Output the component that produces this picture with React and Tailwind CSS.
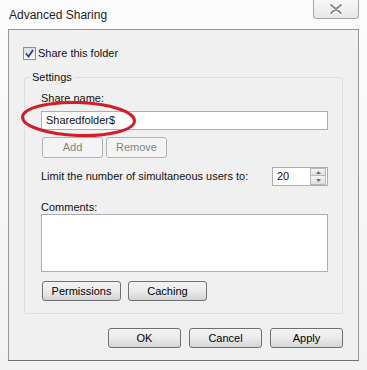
const btn =
  "flex items-center justify-center rounded-[3px] border border-[#707070] bg-linear-to-b from-[#f2f2f2] via-[#ebebeb] to-[#d4d4d4] text-black";
const btnOff =
  "flex items-center justify-center rounded-[3px] border border-[#adb2b5] bg-[#f4f4f4] text-[#838383]";

const CloseGlyph = () => (
  <svg width="14" height="10" viewBox="0 0 14 10">
    <path d="M2 1 L12 9 M12 1 L2 9" stroke="#ffffff" strokeWidth="4" strokeLinecap="round" />
    <path d="M2 1 L12 9 M12 1 L2 9" stroke="#8a8a8a" strokeWidth="2" strokeLinecap="round" />
  </svg>
);

const Check = () => (
  <svg width="9" height="9" viewBox="0 0 9 9">
    <path d="M1 4.5 L3.5 7.5 L8 1" fill="none" stroke="#2a3f86" strokeWidth="1.8" />
  </svg>
);

const Spin = () => (
  <div className="flex w-[16px] flex-col">
    <div className="flex h-[8px] items-center justify-center border border-[#b5b9bd] bg-linear-to-b from-[#f5f5f5] to-[#dedede]">
      <svg width="5" height="3" viewBox="0 0 5 3">
        <path d="M0 3 L2.5 0 L5 3 Z" fill="#6d6d6d" />
      </svg>
    </div>
    <div className="flex h-[9px] items-center justify-center border border-t-0 border-[#b5b9bd] bg-linear-to-b from-[#f5f5f5] to-[#dedede]">
      <svg width="5" height="3" viewBox="0 0 5 3">
        <path d="M0 0 L2.5 3 L5 0 Z" fill="#6d6d6d" />
      </svg>
    </div>
  </div>
);

export default function App() {
  return (
    <div className="relative h-[370px] w-[367px] overflow-hidden bg-linear-to-b from-[#fcfcfc] to-[#f2f2f2] font-['Liberation_Sans',Arial,sans-serif] text-[11px] leading-[13px] text-[#111]">
      <div className="flex h-[29px] items-start justify-between">
        <div className="pl-[9px] pt-[8px] text-[12px] leading-[14px] text-[#1e1e1e]">Advanced Sharing</div>
        <div className="mr-[8px] flex h-[19px] w-[46px] items-center justify-center rounded-b-[4px] border border-t-0 border-[#a3a3a3] bg-linear-to-b from-[#f7f7f7] to-[#e8e8e8]">
          <CloseGlyph />
        </div>
      </div>

      <div className="mx-[8px] h-[332px] border border-[#979797] border-b-[#6f6f6f] bg-[#f0f0f0] px-[15px] pt-[17px]">
        <div className="-ml-px flex h-[13px] items-center">
          <div className="flex h-[13px] w-[13px] items-center justify-center border border-[#8e8f8f] bg-linear-to-b from-[#dcdcdc] to-[#fafafa]">
            <Check />
          </div>
          <span className="ml-[2px]">Share this folder</span>
        </div>

        <fieldset className="mt-[11px] rounded-[3px] border border-[#d5dfe5] pb-[12px]">
          <legend className="ml-[5px] px-[2px]">Settings</legend>
          <div className="pl-[16px] pr-[14px]">
            <div className="mt-[8px]">Share name:</div>
            <div className="mt-[6px] flex h-[19px] items-center border border-[#abadb3] bg-white pl-[4px]">
              Sharedfolder$
            </div>
            <div className="mt-[7px] flex">
              <div className={`${btnOff} ml-px h-[21px] w-[61px]`}>Add</div>
              <div className={`${btnOff} ml-[3px] h-[21px] w-[61px]`}>Remove</div>
            </div>
            <div className="mt-[9px] flex items-center justify-between">
              <span>Limit the number of simultaneous users to:</span>
              <div className="flex h-[19px] w-[56px] items-center justify-between border border-[#abadb3] bg-white pl-[4px] pr-px">
                <span>20</span>
                <Spin />
              </div>
            </div>
            <div className="mt-[15px]">Comments:</div>
            <div className="h-[58px] border border-[#abadb3] bg-white" />
            <div className="mt-[9px] flex">
              <div className={`${btn} ml-px h-[20px] w-[79px]`}>Permissions</div>
              <div className={`${btn} ml-[7px] h-[20px] w-[79px]`}>Caching</div>
            </div>
          </div>
        </fieldset>

        <div className="mt-[14px] flex justify-end gap-[8px]">
          <div className={`${btn} h-[20px] w-[73px]`}>OK</div>
          <div className={`${btn} h-[20px] w-[73px]`}>Cancel</div>
          <div className={`${btn} h-[20px] w-[73px]`}>Apply</div>
        </div>
      </div>

      <svg className="pointer-events-none absolute left-[20px] top-[100px]" width="118" height="40" viewBox="0 0 118 40">
        <ellipse cx="58.5" cy="19" rx="56" ry="16.5" fill="none" stroke="#cf1f2a" strokeWidth="3" transform="rotate(2 58.5 19)" />
      </svg>
    </div>
  );
}
